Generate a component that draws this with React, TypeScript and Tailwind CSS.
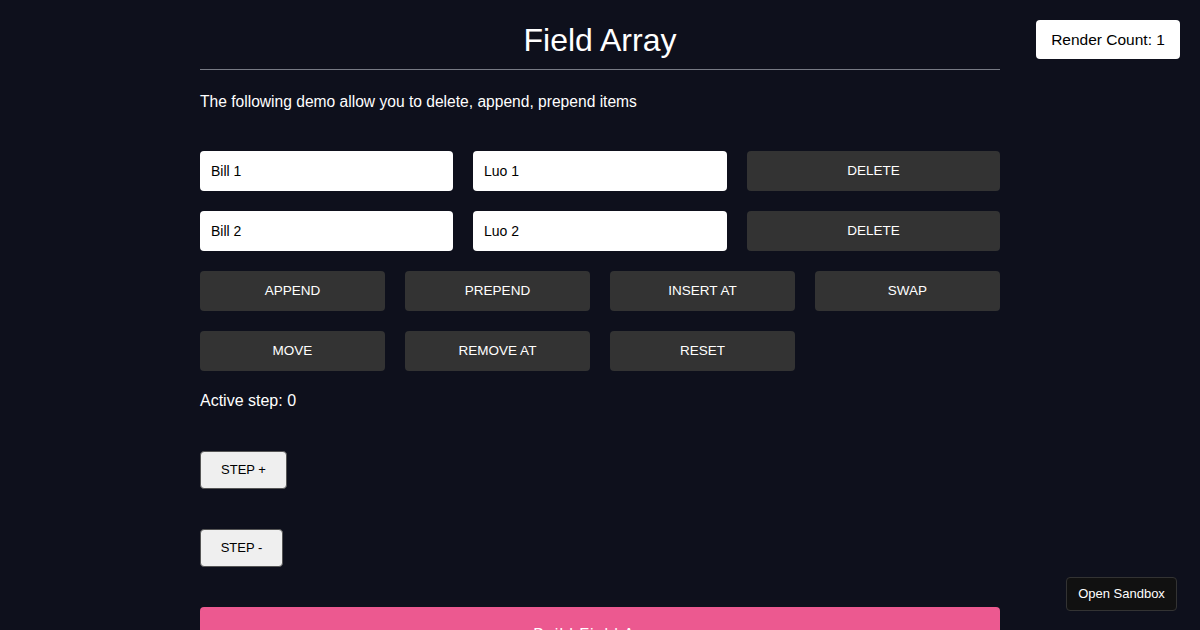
const font = { fontFamily: '"Liberation Sans", Arial, sans-serif' };

function DarkButton({ label }: { label: string }) {
  return (
    <button className="h-10 rounded bg-[#333333] text-[13.5px] uppercase text-white">
      {label}
    </button>
  );
}

function TextInput({ value }: { value: string }) {
  return (
    <input
      readOnly
      value={value}
      className="h-10 rounded bg-white px-[11px] text-sm text-black outline-none"
    />
  );
}

export default function App() {
  const rows = [
    ["Bill 1", "Luo 1"],
    ["Bill 2", "Luo 2"],
  ];

  return (
    <div className="relative h-[630px] w-[1200px] overflow-hidden bg-[#0e101c] text-white" style={font}>
      <div className="absolute right-5 top-5 flex h-[39px] w-[144px] items-center justify-center rounded bg-white text-[15.5px] text-black">
        Render Count: 1
      </div>

      <div className="mx-auto w-[800px]">
        <h1 className="pt-[20px] text-center text-[32px] leading-[40px]">Field Array</h1>
        <div className="mt-[9px] h-px bg-[#777a84]" />
        <p className="mt-[22px] text-[15.6px] leading-5">
          The following demo allow you to delete, append, prepend items
        </p>

        <div className="mt-[39px] flex flex-col gap-5">
          {rows.map(([a, b]) => (
            <div key={a} className="grid grid-cols-[253px_254px_253px] gap-5">
              <TextInput value={a} />
              <TextInput value={b} />
              <DarkButton label="Delete" />
            </div>
          ))}
          <div className="grid grid-cols-4 gap-5">
            <DarkButton label="Append" />
            <DarkButton label="Prepend" />
            <DarkButton label="Insert at" />
            <DarkButton label="Swap" />
          </div>
          <div className="grid grid-cols-4 gap-5">
            <DarkButton label="Move" />
            <DarkButton label="Remove at" />
            <DarkButton label="Reset" />
          </div>
        </div>

        <p className="mt-[20px] text-base leading-5">Active step: 0</p>

        <button className="mt-[40px] block h-[38px] w-[87px] rounded border border-[#555] bg-[#efefef] text-[13px] text-black">
          STEP +
        </button>
        <button className="mt-[40px] block h-[38px] w-[83px] rounded border border-[#555] bg-[#efefef] text-[13px] text-black">
          STEP -
        </button>

        <button className="mt-[40px] flex h-12 w-full items-start justify-center rounded bg-[#ec5990] pt-[18px] text-base leading-5 tracking-[1px] text-white">
          Build Field Array
        </button>
      </div>

      <div className="absolute bottom-[19px] right-[23px] flex h-[34px] w-[111px] items-center justify-center rounded border border-[#333] bg-[#111111] text-[13px] text-white">
        Open Sandbox
      </div>
    </div>
  );
}
